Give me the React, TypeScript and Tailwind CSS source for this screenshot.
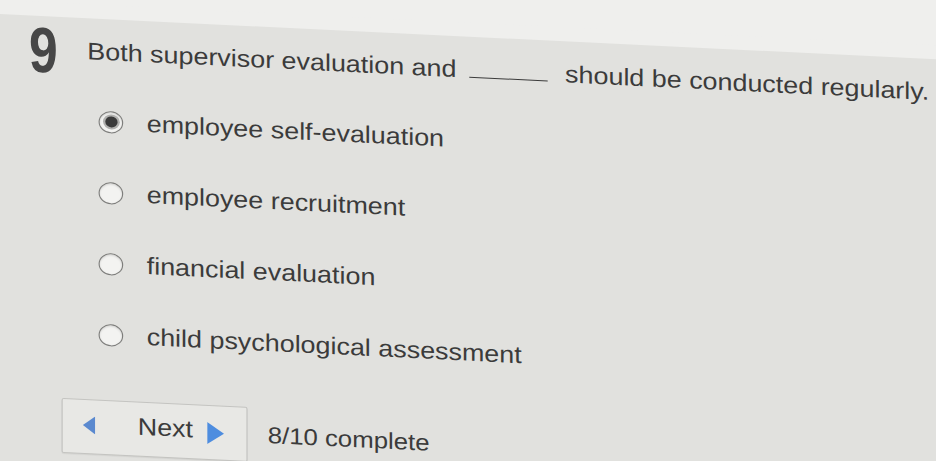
import React from "react";

const options = [
  { label: "employee self-evaluation", checked: true },
  { label: "employee recruitment", checked: false },
  { label: "financial evaluation", checked: false },
  { label: "child psychological assessment", checked: false },
];

function Radio({ checked }: { checked: boolean }) {
  return (
    <div className="flex h-[22px] w-[22px] shrink-0 items-center justify-center rounded-full border-[1.5px] border-[#7d7d7b] bg-[#f3f3f1] shadow-[inset_0_1px_2px_rgba(0,0,0,0.15)]">
      {checked ? <div className="h-[11px] w-[11px] rounded-full bg-[#3a3a3a] ring-2 ring-[#b0b0ae]" /> : null}
    </div>
  );
}

export default function App() {
  return (
    <div className="h-[461px] w-[936px] overflow-hidden bg-[#efefed] font-['Liberation_Sans',Arial,sans-serif] text-[#3b3b3b]">
      <div className="w-[860px] origin-top-left scale-x-[1.12] skew-y-[3.1deg]">
        <div className="h-[14px] bg-[#efefed]" />
        <div className="h-[640px] bg-[#e1e1de]">
          <div className="flex items-start pl-[26px] pt-[2px]">
            <div className="w-[28px] origin-left scale-x-[0.72] text-[64px] font-bold leading-none text-[#474747]">9</div>
            <div className="ml-[24px] mt-[19px] flex items-baseline whitespace-nowrap text-[24px] leading-none">
              <span>Both supervisor evaluation and</span>
              <span className="mx-[11px] inline-block w-[70px] border-b-[1.5px] border-[#3b3b3b]" />
              <span className="ml-[5px]">should be conducted regularly.</span>
            </div>
          </div>

          <div className="mt-[1px] flex flex-col pl-[88px]">
            {options.map((opt) => (
              <div key={opt.label} className="flex h-[71px] items-center gap-[21px]">
                <Radio checked={opt.checked} />
                <span className="text-[24px] leading-none">{opt.label}</span>
              </div>
            ))}
          </div>

          <div className="mt-[30px] flex items-center pl-[55px]">
            <div className="flex h-[55px] w-[166px] items-center rounded-[2px] border border-[#c4c4c1] bg-[#e8e8e5] pb-[6px] shadow-[0_1px_1px_rgba(0,0,0,0.06)]">
              <svg width="11" height="18" viewBox="0 0 11 18" className="ml-[18px] mt-[2px]">
                <polygon points="11,0 0,9 11,18" fill="#5a89cf" />
              </svg>
              <span className="ml-[38px] text-[24px] leading-none">Next</span>
              <svg width="15" height="22" viewBox="0 0 15 22" className="ml-[13px] mt-[6px]">
                <polygon points="0,0 15,11 0,22" fill="#4e8ddf" />
              </svg>
            </div>
            <span className="ml-[18px] text-[23px] leading-none">8/10 complete</span>
          </div>
        </div>
      </div>
    </div>
  );
}
